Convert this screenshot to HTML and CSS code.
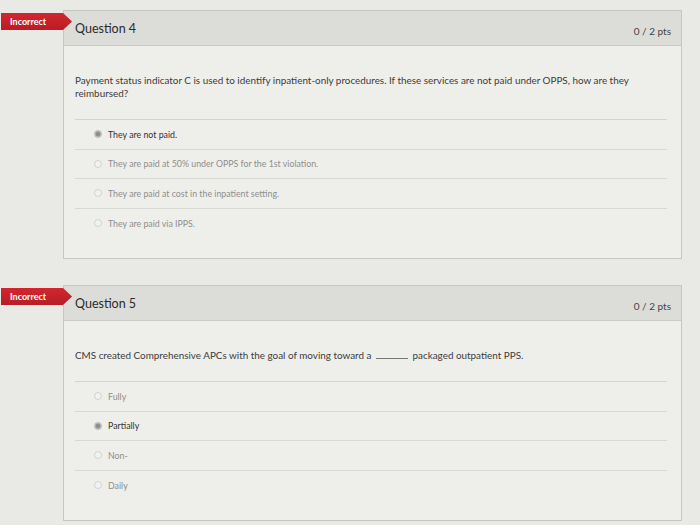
FILE: index.html
```html
<!DOCTYPE html>
<html lang="en">
<head>
    <meta charset="UTF-8">
    <title>Quiz Results</title>
    <link rel="stylesheet" href="styles.css">
</head>
<body>
    <main class="quiz">
        <div class="question">
            <div class="flag">Incorrect</div>
            <div class="question-header">
                <span class="question-title">Question 4</span>
                <span class="question-pts">0 / 2 pts</span>
            </div>
            <div class="question-body">
                <p class="question-text">Payment status indicator C is used to identify inpatient-only procedures. If these services are not paid under OPPS, how are they reimbursed?</p>
                <div class="answers">
                    <div class="answer selected"><span class="radio"></span>They are not paid.</div>
                    <div class="answer"><span class="radio"></span>They are paid at 50% under OPPS for the 1st violation.</div>
                    <div class="answer"><span class="radio"></span>They are paid at cost in the inpatient setting.</div>
                    <div class="answer"><span class="radio"></span>They are paid via IPPS.</div>
                </div>
            </div>
        </div>
        <div class="question">
            <div class="flag">Incorrect</div>
            <div class="question-header">
                <span class="question-title">Question 5</span>
                <span class="question-pts">0 / 2 pts</span>
            </div>
            <div class="question-body">
                <p class="question-text">CMS created Comprehensive APCs with the goal of moving toward a <span class="blank"></span> packaged outpatient PPS.</p>
                <div class="answers">
                    <div class="answer"><span class="radio"></span>Fully</div>
                    <div class="answer selected"><span class="radio"></span>Partially</div>
                    <div class="answer"><span class="radio"></span>Non-</div>
                    <div class="answer"><span class="radio"></span>Daily</div>
                </div>
            </div>
        </div>
    </main>
</body>
</html>
```

FILE: styles.css
```css
* { margin: 0; padding: 0; box-sizing: border-box; font-family: 'Lato', 'Liberation Sans', sans-serif; }
body { background-color: #e9e9e6; color: #3a3a3a; height: 525px; overflow: hidden; }
.quiz { padding: 10px 18px 0 63px; display: flex; flex-direction: column; gap: 26px; }
.question { position: relative; border: 1px solid #c6c6c3; background-color: #eeeeeb; }
.flag { position: absolute; top: 2px; left: -63px; width: 71px; height: 17px; padding-left: 9px; background: linear-gradient(#d3262f, #b81d25); color: #ffffff; font-size: 9px; font-weight: 700; line-height: 17px; clip-path: polygon(0 0, 62px 0, 71px 50%, 62px 100%, 0 100%); }
.question-header { height: 35px; display: flex; justify-content: space-between; align-items: center; padding: 0 10px 0 11px; background-color: #dcdcd9; border-bottom: 1px solid #c9c9c6; }
.question-title { font-size: 12.5px; color: #2b2b2b; }
.question-pts { font-size: 10px; color: #444444; margin-top: 6px; }
.question-body { padding: 28px 14px 20px 11px; }
.question-text { font-size: 9.9px; line-height: 13px; color: #3c3c3c; margin-bottom: 19px; }
.blank { display: inline-block; width: 32px; border-bottom: 1px solid #777777; margin: 0 2px; }
.answers { border-top: 1px solid #d4d4d1; }
.answer { height: 29.5px; display: flex; align-items: center; gap: 6px; padding-left: 19px; border-bottom: 1px solid #d8d8d5; font-size: 8.8px; color: #8e8e8c; }
.answer:last-child { border-bottom: none; }
.answer.selected { color: #333333; }
.radio { width: 8px; height: 8px; border-radius: 50%; border: 1px solid #d2d2cf; background-color: #f2f2f0; }
.answer.selected .radio { border-color: #b6b6b3; background: radial-gradient(circle, #8e8e8c 45%, #c4c4c1 70%); }
```
